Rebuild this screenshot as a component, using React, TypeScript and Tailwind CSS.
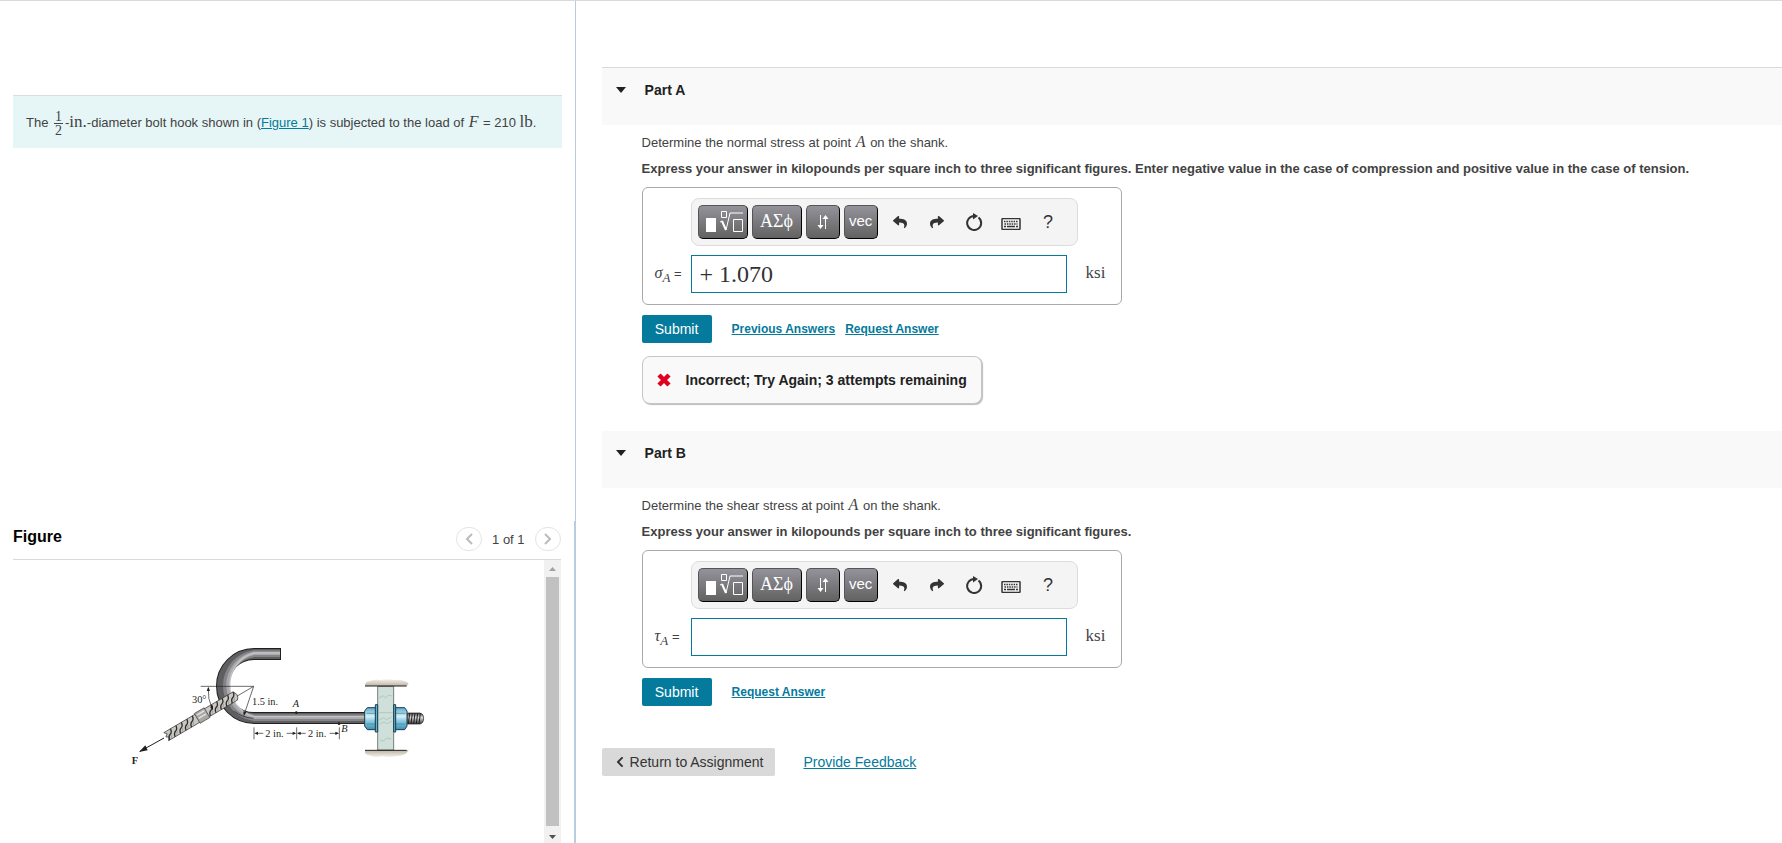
import { useState, type ReactNode } from "react";
import { FaChevronLeft, FaShare, FaReply } from "react-icons/fa";

function MathText({ children, italic = false }: { children: ReactNode; italic?: boolean }) {
    return (
        <span className={italic ? "font-['Liberation_Serif',serif] mx-px text-base leading-4 italic" : "font-['Liberation_Serif',serif] text-[17px] leading-4"}>
            {children}
        </span>
    );
}

function HookFigure() {
    const strands = [0, 19, 38, 57, 76, 142, 161, 180, 199, 218];
    return (
        <svg viewBox="0 0 960 450" className="w-80 h-[150px] shrink-0" role="img" aria-label="Bolt hook loaded by force F at 30 degrees">
            <defs>
                <linearGradient id="washer" x1="0" y1="0" x2="0" y2="1">
                    <stop offset="0" stopColor="#5fa9c6" />
                    <stop offset="0.4" stopColor="#d5f0f8" />
                    <stop offset="0.6" stopColor="#8ccbe2" />
                    <stop offset="1" stopColor="#3c8fb2" />
                </linearGradient>
                <linearGradient id="thread" x1="0" y1="0" x2="0" y2="1">
                    <stop offset="0" stopColor="#444" />
                    <stop offset="0.4" stopColor="#ddd" />
                    <stop offset="1" stopColor="#333" />
                </linearGradient>
                <linearGradient id="ceiling" x1="0" y1="0" x2="0" y2="1">
                    <stop offset="0" stopColor="#f4f1ea" />
                    <stop offset="1" stopColor="#bdb5a5" />
                </linearGradient>
                <linearGradient id="floor" x1="0" y1="1" x2="0" y2="0">
                    <stop offset="0" stopColor="#f4f1ea" />
                    <stop offset="1" stopColor="#bdb5a5" />
                </linearGradient>
            </defs>

            {/* hook and shank */}
            <g fill="none">
                <path d="M483 72H402A96 96 0 0 0 402 264H740" stroke="#231f20" strokeWidth="36" />
                <path d="M480 72H402A96 96 0 0 0 402 264H740" stroke="#5e5d60" strokeWidth="30" />
                <path d="M480 71H402A97 97 0 0 0 402 263H740" stroke="#858487" strokeWidth="20" />
                <path d="M480 70H402A98 98 0 0 0 402 262H740" stroke="#aaa9ac" strokeWidth="10" />
                <path d="M480 69H402A99 99 0 0 0 402 260H740" stroke="#c4c3c6" strokeWidth="4" />
            </g>

            {/* rope */}
            <g transform="translate(142 318) rotate(-30.5)">
                <path d="M-4 -14L3 -6L-5 0L3 6L-4 14H236Q250 0 236 -14Z" fill="#c9c8c3" stroke="#333" strokeWidth="2" />
                {strands.map((x) => (
                    <g key={x} fill="none" stroke="#2e2d2c">
                        <path d={`M${x} 14Q${x + 2} 2 ${x + 10} 0T${x + 19} -14`} strokeWidth="4" />
                        <path d={`M${x + 7} 11L${x + 14} 3`} stroke="#96938e" strokeWidth="2" />
                    </g>
                ))}
                <path d="M104 -17H138V17H104Z" fill="#a8a7a5" stroke="#444" strokeWidth="2" />
                <path d="M108 -9H134M108 2H134" stroke="#dfdedb" strokeWidth="5" />
            </g>

            {/* wall with nuts */}
            <path d="M735 168Q734 154 748 154Q764 146 782 150Q804 145 825 150Q848 147 866 160L860 168Z" fill="url(#ceiling)" />
            <path d="M735 361Q732 374 748 376Q766 384 786 379Q810 384 832 378Q855 379 866 361Z" fill="url(#floor)" />
            <path d="M773 169H821V360H773Z" fill="#cfe0da" stroke="#444" strokeWidth="2" />
            <path d="M777 204l12-7 7 6 10-7 12 2M777 270l14-7 8 6 16-8M780 282l12-6 10 5 14-8M780 330l10 3 12-9 12 3M776 248h42" fill="none" stroke="#b0c8c0" strokeWidth="3" />
            <path d="M735 168H860M735 361H860" stroke="#231f20" strokeWidth="3" />
            <path d="M862 249H900Q911 251 911 264Q911 280 900 282H862Z" fill="url(#thread)" stroke="#231f20" strokeWidth="2" />
            <path d="M869 249l-4 33M877 249l-4 33M885 249l-4 33M893 249l-4 33M901 250l-4 32" stroke="#231f20" strokeWidth="3" />
            <path d="M742 233H768V299H742L734 288V243Z" fill="url(#washer)" stroke="#173e50" strokeWidth="3" />
            <path d="M826 233H854L861 243V288L854 299H826Z" fill="url(#washer)" stroke="#173e50" strokeWidth="3" />
            <path d="M740 250H766M740 282H766M828 250H856M828 282H856" stroke="#417e97" strokeWidth="2" />
            <path d="M766 224H773V306H766ZM821 224H827V306H821Z" fill="#68b2d0" stroke="#173e50" strokeWidth="3" />

            {/* dimension lines */}
            <g fill="none" stroke="#231f20" strokeWidth="2">
                <path d="M242 169H401L352 198M401 169L373 252M343 244Q365 262 401 265M265 175Q263 206 275 232" />
                <path d="M402 292V328M530 292V328M658 292V328M408 310H430M500 310H525M535 310H557M629 310H653" />
                <path d="M60 364L132 324" strokeWidth="3" />
            </g>
            <g fill="#231f20">
                <path d="M57 366L76 346L83 361ZM265 170L260 183H270ZM279 240L270 231L279 226ZM371 259L370 244L379 247Z" />
                <path d="M403 310L414 305V315ZM529 310L518 305V315ZM531 310L542 305V315ZM657 310L646 305V315Z" />
                <circle cx="529" cy="248" r="4" />
                <circle cx="657" cy="281" r="4" />
            </g>
            <g className="font-['Liberation_Serif',serif] text-[31px]" fill="#231f20">
                <text x="216" y="220">30°</text>
                <text x="396" y="224">1.5 in.</text>
                <text x="518" y="231" fontStyle="italic">A</text>
                <text x="664" y="307" fontStyle="italic">B</text>
                <text x="436" y="320">2 in.</text>
                <text x="564" y="320">2 in.</text>
                <text x="35" y="403" fontWeight="bold">F</text>
            </g>
        </svg>
    );
}

function ProblemPane() {
    return (
        <aside className="flex flex-col min-h-0">
            <div className="h-[61.7%] border-r border-[#b9cce0] px-[13px] pt-[94px]">
                <p className="flex items-center h-[53px] border-t border-[#d9dfdd] bg-[#e6f6f6] px-[13px] pt-0.5 whitespace-pre">
                    <span>The </span>
                    <span className="flex flex-col items-center mx-0.5 font-['Liberation_Serif',serif] text-sm leading-[13px]">
                        <span className="border-b border-[#444] px-px">1</span>
                        <span>2</span>
                    </span>
                    <span>
                        -<MathText>in.</MathText>-diameter bolt hook shown in (
                        <a href="#figure" className="text-[#047a9c] underline">Figure 1</a>) is subjected to the load of{" "}
                        <MathText italic>F</MathText> = 210 <MathText>lb</MathText>.
                    </span>
                </p>
            </div>
            <section id="figure" className="flex flex-col flex-1 min-h-0 border-r-2 border-[#b9cce0] pl-[13px] pr-[13px]">
                <div className="flex items-center justify-between h-[39px] pt-0.5 border-b border-[#d9d9d9] shrink-0">
                    <h2 className="text-base leading-5 font-bold text-black pb-2">Figure</h2>
                    <div className="flex items-center gap-2.5 pb-1">
                        <button aria-label="Previous figure" className="flex items-center justify-center w-[26px] h-6 rounded-full border border-[#e4e4e4]">
                            <svg viewBox="0 0 8 12" className="w-2 h-3" fill="none" stroke="#bbb" strokeWidth="2"><path d="M7 1L2 6l5 5" /></svg>
                        </button>
                        <span className="pt-0.5">1 of 1</span>
                        <button aria-label="Next figure" className="flex items-center justify-center w-[26px] h-6 rounded-full border border-[#e4e4e4]">
                            <svg viewBox="0 0 8 12" className="w-2 h-3" fill="none" stroke="#bbb" strokeWidth="2"><path d="M1 1l5 5-5 5" /></svg>
                        </button>
                    </div>
                </div>
                <div className="flex flex-1 min-h-0">
                    <div className="flex-1 overflow-hidden pt-[70px] pl-[107px]">
                        <HookFigure />
                    </div>
                    <div className="flex flex-col items-center w-[17px] bg-[#f1f1f1]">
                        <svg viewBox="0 0 17 17" className="size-[17px]"><path d="M5 11h7L8.500 7z" fill="#a3a3a3" /></svg>
                        <div className="flex-1 w-[13px] bg-[#c1c1c1]" />
                        <svg viewBox="0 0 17 17" className="size-[17px]"><path d="M5 9h7l-3.500 4z" fill="#505050" /></svg>
                    </div>
                </div>
            </section>
        </aside>
    );
}

const toolButton =
    "flex items-center justify-center h-[34px] rounded-[5px] border border-t-[#555] border-l-[#555] border-r-black border-b-black bg-linear-to-b from-[#94939b] to-[#626262] text-white";
const iconButton = "flex items-center justify-center w-[37px] h-[34px] text-[#333]";

function Toolbar() {
    return (
        <div className="flex items-center gap-1 w-[387px] h-12 rounded-lg border border-[#dcdcdc] bg-[#f4f4f4] px-1.5">
            <button aria-label="Templates" className={`${toolButton} w-[50px]`}>
                <svg viewBox="0 0 40 26" className="w-10 h-[26px]" fill="none" stroke="#fff">
                    <path d="M3 9h10v14H3z" fill="#fff" stroke="none" />
                    <path d="M18.500 2.500h5v6h-5zM30.500 10.500h9v12h-9z" />
                    <path d="M17 13l2-1 4 9 4-17h13" />
                    <path d="M19 12l4 9" strokeWidth="2" />
                </svg>
            </button>
            <button aria-label="Greek symbols" className={`${toolButton} w-[50px] pb-0.5 font-['Liberation_Serif',serif] text-lg leading-6`}>ΑΣϕ</button>
            <button aria-label="Subscript and superscript" className={`${toolButton} w-[34px]`}>
                <svg viewBox="0 0 14 18" className="w-3.5 h-[18px]" fill="none" stroke="#fff">
                    <path d="M4.500 2v13M9.500 16V3" />
                    <path d="M1.500 12l3 4 3-4zM6.500 6l3-4 3 4z" fill="#fff" strokeWidth="0" />
                </svg>
            </button>
            <button aria-label="Vector" className={`${toolButton} w-[34px] text-[15px] pb-0.5`}>vec</button>
            <div className="flex">
                <button aria-label="Undo" className={iconButton}><FaReply className="size-3.5" /></button>
                <button aria-label="Redo" className={iconButton}><FaShare className="size-3.5" /></button>
                <button aria-label="Reset" className={iconButton}>
                    <svg viewBox="0 0 18 18" className="size-[18px]" fill="none" stroke="#333" strokeWidth="2">
                        <path d="M13.500 4.500A7 7 0 1 1 9 3" />
                        <path d="M8 0l5 3-5 3.500z" fill="#333" stroke="none" />
                    </svg>
                </button>
                <button aria-label="Keyboard shortcuts" className={`${iconButton} pt-1`}>
                    <svg viewBox="0 0 20 12" className="w-5 h-3" fill="none" stroke="#333">
                        <rect x="1" y="0.500" width="18" height="11" rx="1" strokeWidth="1.500" />
                        <path d="M3 3.500h14M3.500 6h13" strokeWidth="1.500" strokeDasharray="1.500 0.900" />
                        <path d="M3 8.500h2M6 8.500h8M15 8.500h2" strokeWidth="1.500" />
                    </svg>
                </button>
                <button aria-label="Help" className={`${iconButton} text-lg`}>?</button>
            </div>
        </div>
    );
}

interface PartProps {
    name: string;
    question: string;
    instruction: string;
    symbol: string;
    initial?: string;
    links: string[];
    children?: ReactNode;
}

function Part({ name, question, instruction, symbol, initial = "", links, children }: PartProps) {
    const [value, setValue] = useState(initial);
    const id = `answer-${name}`;
    return (
        <section>
            <h2 className="h-[57px] bg-[#f9f9f9] pt-3 pl-3.5">
                <button className="flex items-center gap-[19px] text-sm leading-5 font-bold text-[#212121]">
                    <svg viewBox="0 0 10 6" className="w-2.5 h-1.5"><path d="M0 0h10L5 6z" fill="#212121" /></svg>
                    Part {name}
                </button>
            </h2>
            <div className="pl-10 pt-2">
                <p className="leading-5">
                    {question} <MathText italic>A</MathText> on the shank.
                </p>
                <p className="mt-1.5 leading-5 font-bold">{instruction}</p>
                <div className="w-fit mt-2 rounded-md border border-[#a9a9a9] pt-2.5 pr-4 pb-[11px] pl-3">
                    <div className="grid grid-cols-[auto_auto_auto] items-center gap-y-[9px]">
                        <div className="col-start-2 row-start-1"><Toolbar /></div>
                        <label htmlFor={id} className="col-start-1 row-start-2 min-w-9 pr-2 whitespace-nowrap">
                            <span className="font-['Liberation_Serif',serif] text-base leading-4 italic">{symbol}</span>
                            <sub className="font-['Liberation_Serif',serif] text-[13px] leading-4 italic">A</sub> =
                        </label>
                        <input
                            id={id}
                            value={value}
                            onChange={(e) => setValue(e.target.value)}
                            className="col-start-2 row-start-2 w-[376px] h-[38px] border border-[#047a9c] bg-white px-2 font-['Liberation_Serif',serif] text-2xl text-[#333] outline-none"
                        />
                        <span className="col-start-3 row-start-2 pl-2">
                            <MathText>ksi</MathText>
                        </span>
                    </div>
                </div>
                <div className="flex items-center mt-2.5">
                    <button className="w-[70px] h-7 rounded-xs bg-[#047a9c] text-sm text-white">Submit</button>
                    <div className="flex gap-2.5 ml-5 text-xs font-bold text-[#047a9c]">
                        {links.map((link) => (
                            <a key={link} href="#" className="underline">{link}</a>
                        ))}
                    </div>
                </div>
                {children}
            </div>
        </section>
    );
}

export default function App() {
    return (
        <div className="grid grid-cols-[32.3%_1fr] h-screen border-t border-[#d9d9d9] bg-white font-['Liberation_Sans',Arial,sans-serif] text-[13px] text-[#424242]">
            <ProblemPane />
            <main className="overflow-hidden pl-[26px] pt-[66px]">
                <div className="border-t border-[#d9d9d9]">
                    <Part
                        name="A"
                        question="Determine the normal stress at point"
                        instruction="Express your answer in kilopounds per square inch to three significant figures. Enter negative value in the case of compression and positive value in the case of tension."
                        symbol="σ"
                        initial="+ 1.070"
                        links={["Previous Answers", "Request Answer"]}
                    >
                        <div className="flex items-center gap-[15px] w-fit h-12 mt-[13px] rounded-lg border border-[#c6c6c6] bg-[#f9f9f9] px-3.5 text-sm font-bold text-[#212121] shadow-[1px_1px_1px_#bbb]">
                            <svg viewBox="0 0 14 14" className="size-3.5" stroke="#e0001f" strokeWidth="4.500"><path d="M2 2l10 10M12 2L2 12" /></svg>
                            Incorrect; Try Again; 3 attempts remaining
                        </div>
                    </Part>
                </div>
                <div className="mt-[27px]">
                    <Part
                        name="B"
                        question="Determine the shear stress at point"
                        instruction="Express your answer in kilopounds per square inch to three significant figures."
                        symbol="τ"
                        links={["Request Answer"]}
                    />
                </div>
                <div className="flex items-center gap-7 mt-[42px] text-sm">
                    <button className="flex items-center gap-1 h-7 rounded-xs bg-[#d9d9d9] px-3 text-[#333]">
                        <FaChevronLeft className="size-3" />
                        Return to Assignment
                    </button>
                    <a href="#" className="text-[#047a9c] underline">Provide Feedback</a>
                </div>
            </main>
        </div>
    );
}
